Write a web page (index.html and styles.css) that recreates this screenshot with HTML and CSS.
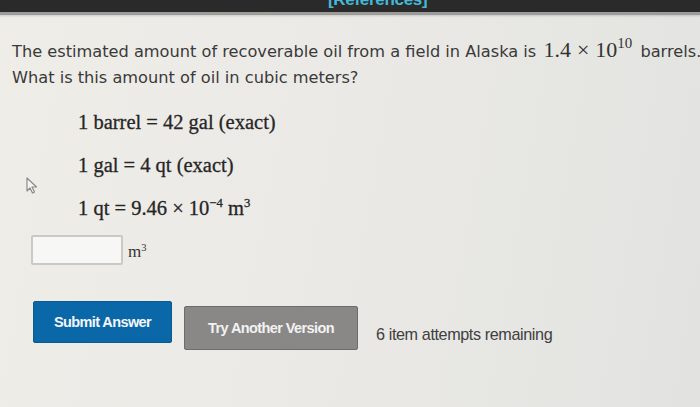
FILE: index.html
```html
<!DOCTYPE html>
<html>
<head>
<meta charset="utf-8">
<link rel="stylesheet" href="styles.css">
</head>
<body>
<div class="topbar"><span class="refs">[References]</span></div>
<div class="page">
  <p class="question">The estimated amount of recoverable oil from a field in Alaska is <span class="math big">1.4<span class="times">×</span>10<sup>10</sup></span> barrels.<br>What is this amount of oil in cubic meters?</p>
  <div class="eqs">
    <div class="eq">1 barrel = 42 gal (exact)</div>
    <div class="eq">1 gal = 4 qt (exact)</div>
    <div class="eq">1 qt = 9.46 × 10<sup>−4</sup> m<sup>3</sup></div>
  </div>
  <div class="answer">
    <div class="input"></div>
    <span class="unit">m<sup>3</sup></span>
  </div>
  <div class="actions">
    <div class="btn submit">Submit Answer</div>
    <div class="btn another">Try Another Version</div>
    <div class="attempts">6 item attempts remaining</div>
  </div>
  <svg class="cursor" width="12" height="17" viewBox="0 0 12 17"><path d="M1 1 L1 14 L4 11 L6.5 16 L8.5 15 L6 10 L10.5 10 Z" fill="#f4f4f2" stroke="#8a8a8a" stroke-width="1.2" stroke-linejoin="round"/></svg>
</div>
</body>
</html>
```
FILE: styles.css
```css
html, body {
  margin: 0;
  padding: 0;
}
body {
  width: 700px;
  height: 407px;
  overflow: hidden;
  background: linear-gradient(100deg, #efede8 0%, #eceae6 40%, #e6e6e3 75%, #e2e2e0 100%);
  font-family: "DejaVu Sans", "Liberation Sans", sans-serif;
  color: #3a3a3a;
}
.topbar {
  height: 12px;
  background: #2a2a2a;
  border-bottom: 3px solid #9c9c9a;
  overflow: hidden;
  padding-left: 328px;
  box-shadow: 0 1px 2px rgba(0,0,0,0.15);
}
.refs {
  display: block;
  margin-top: -10px;
  font-family: "Liberation Sans", sans-serif;
  font-weight: bold;
  font-size: 17px;
  line-height: 20px;
  color: #45b9d8;
  letter-spacing: -0.3px;
}
.page {
  position: relative;
  padding: 22px 0 0 12px;
}
.question {
  margin: 0;
  font-size: 16.2px;
  line-height: 26px;
  white-space: nowrap;
}
.math {
  font-family: "Liberation Serif", serif;
}
.big {
  font-size: 22px;
  color: #333;
  margin: 0 3px 0 2px;
}
.times {
  margin: 0 6px;
}
.big sup {
  font-size: 0.68em;
}
sup {
  font-size: 0.62em;
  vertical-align: 0.6em;
  line-height: 0;
}
.eqs {
  margin: 18px 0 0 66px;
  font-family: "Liberation Serif", serif;
  font-size: 20.5px;
  color: #262626;
  -webkit-text-stroke: 0.3px #262626;
  display: flex;
  flex-direction: column;
  gap: 17px;
}
.eq {
  line-height: 26px;
}
.answer {
  display: flex;
  align-items: center;
  margin: 14px 0 0 19px;
  gap: 5px;
}
.input {
  width: 88px;
  height: 26px;
  background: #f7f7f5;
  border: 2px solid #c9c9c7;
  border-radius: 2px;
}
.unit {
  font-family: "Liberation Serif", serif;
  font-size: 17px;
  color: #333;
  margin-top: 4px;
}
.actions {
  display: flex;
  align-items: flex-start;
  margin: 36px 0 0 21px;
}
.btn {
  display: flex;
  align-items: center;
  justify-content: center;
  font-family: "Liberation Sans", sans-serif;
  font-weight: bold;
  font-size: 14.5px;
  letter-spacing: -0.6px;
  color: #f4f6f8;
  border-radius: 2px;
}
.submit {
  width: 137px;
  height: 40px;
  background: #0b68a8;
  border: 1px solid #0a5a90;
}
.another {
  margin: 5px 0 0 12px;
  width: 172px;
  height: 42px;
  background: #8a8887;
  border: 1px solid #6e6c6b;
  color: #f2f2f2;
}
.attempts {
  margin: 24px 0 0 18px;
  font-family: "Liberation Sans", sans-serif;
  font-size: 16.2px;
  letter-spacing: -0.4px;
  color: #404040;
}
.cursor {
  position: absolute;
  left: 26px;
  top: 162px;
}
```
